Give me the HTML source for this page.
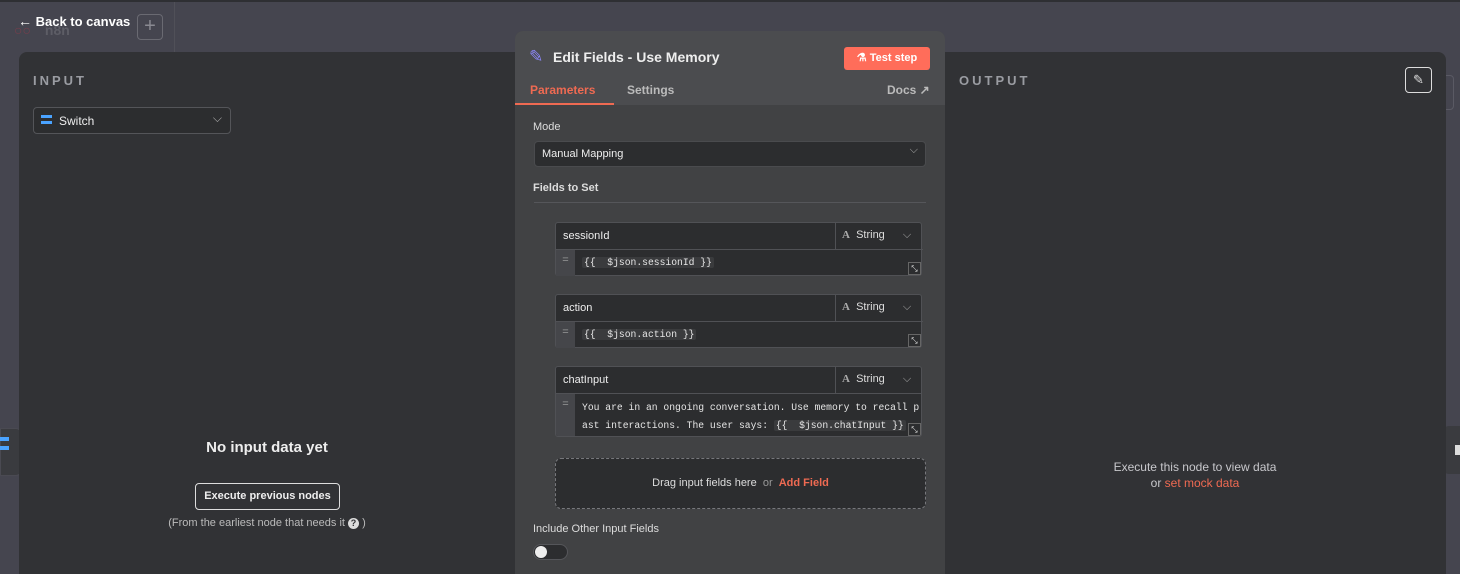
<!DOCTYPE html>
<html><head><style>
*{box-sizing:border-box;margin:0;padding:0}
html,body{width:1460px;height:574px;overflow:hidden}
body{background:#45454f;font-family:"Liberation Sans",sans-serif;position:relative;color:#ddd}
.abs{position:absolute}
.lbl{font-size:13px;letter-spacing:3px;color:#9a9ca2;font-weight:bold}
.inp{background:#2c2d2f;border:1px solid #545559;border-radius:4px}
.mono{font-family:"Liberation Mono",monospace;font-size:9.7px;color:#e6e6e6}
.chip{background:#3a3b3d;border-radius:2px;padding:0 2px}
</style></head><body>
<div class="abs" style="left:0;top:0;width:1460px;height:2px;background:#2e2f33"></div>
<div class="abs" style="left:174px;top:2px;width:1px;height:50px;background:#505058"></div>
<div class="abs" style="left:14px;top:22px;color:#7a3e4c;font-size:14px;font-weight:bold">○○<span style="margin-left:14px;color:#5d5d66">n8n</span></div>
<div class="abs" style="left:18px;top:13px;font-size:13px;font-weight:bold;color:#fff"><span style="font-size:14px">←</span> Back to canvas</div>
<div class="abs" style="left:137px;top:14px;width:26px;height:26px;border:1px solid #6a6a72;border-radius:4px;color:#8a8a92;text-align:center;line-height:22px;font-size:20px">+</div>
<div class="abs" style="left:1430px;top:75px;width:24px;height:35px;border:1px solid #5a5a64;border-radius:4px"></div>
<div class="abs" style="left:0;top:428px;width:22px;height:48px;background:#3a3b3f;border-radius:0 6px 6px 0;border:1px solid #4a4a52"></div>
<div class="abs" style="left:0;top:437px;width:9px;height:4px;background:#4aa3ff"></div>
<div class="abs" style="left:0;top:446px;width:9px;height:4px;background:#4aa3ff"></div>
<div class="abs" style="left:1443px;top:426px;width:17px;height:48px;background:#3a3b3f;border-radius:6px 0 0 6px"></div>
<div class="abs" style="left:1455px;top:445px;width:5px;height:10px;background:#ddd"></div>

<div class="abs" style="left:19px;top:52px;width:1427px;height:522px;background:#313235;border-radius:8px 8px 0 0"></div>
<div class="abs lbl" style="left:33px;top:73px">INPUT</div>
<div class="abs inp" style="left:33px;top:107px;width:198px;height:27px;font-size:12px;color:#eee;padding:6px 0 0 25px">Switch<span style="position:absolute;right:8px;top:3px;color:#aaa">⌵</span>
<span style="position:absolute;left:7px;top:7px;width:11px;height:3px;background:#4aa3ff"></span><span style="position:absolute;left:7px;top:13px;width:11px;height:3px;background:#4aa3ff"></span></div>
<div class="abs" style="left:19px;top:439px;width:496px;text-align:center;font-size:15px;font-weight:bold;color:#eee">No input data yet</div>
<div class="abs" style="left:195px;top:483px;width:145px;height:27px;border:1px solid #ddd;border-radius:4px;font-size:11px;font-weight:bold;color:#eee;text-align:center;line-height:25px">Execute previous nodes</div>
<div class="abs" style="left:19px;top:517px;width:496px;text-align:center;font-size:11px;color:#bbb">(From the earliest node that needs it <b style="display:inline-block;width:11px;height:11px;border-radius:50%;background:#ddd;color:#313235;font-size:9px;line-height:11px">?</b> )</div>

<div class="abs lbl" style="left:959px;top:73px">OUTPUT</div>
<div class="abs" style="left:1405px;top:67px;width:27px;height:26px;border:1px solid #ddd;border-radius:4px;color:#ddd;font-size:13px;text-align:center;line-height:24px">✎</div>
<div class="abs" style="left:945px;top:459px;width:500px;text-align:center;font-size:12px;color:#c8c8cc;line-height:16px">Execute this node to view data<br>or <span style="color:#ef6a52">set mock data</span></div>

<div class="abs" style="left:515px;top:31px;width:430px;height:543px;background:#414244;border-radius:8px 8px 0 0;overflow:hidden">
 <div style="position:absolute;left:0;top:0;width:430px;height:74px;background:#4b4c4f"></div>
 <div style="position:absolute;left:14px;top:16px;color:#8b86f5;font-size:17px">✎</div>
 <div style="position:absolute;left:38px;top:18px;font-size:14px;font-weight:bold;color:#eee">Edit Fields - Use Memory</div>
 <div style="position:absolute;left:329px;top:16px;width:86px;height:23px;background:#ff6d5a;border-radius:3px;color:#fff;font-size:11px;font-weight:bold;text-align:center;line-height:23px">⚗ Test step</div>
 <div style="position:absolute;left:15px;top:52px;font-size:12px;font-weight:bold;color:#ef6a52">Parameters</div>
 <div style="position:absolute;left:0;top:72px;width:99px;height:2px;background:#ef6a52"></div>
 <div style="position:absolute;left:112px;top:52px;font-size:12px;font-weight:bold;color:#bbb">Settings</div>
 <div style="position:absolute;left:372px;top:52px;font-size:12px;font-weight:bold;color:#bbb">Docs ↗</div>
 <div style="position:absolute;left:18px;top:90px;font-size:11px;color:#ddd">Mode</div>
 <div class="inp" style="position:absolute;left:19px;top:110px;width:392px;height:26px;font-size:11px;color:#eee;padding:6px 7px;border-color:#4a4b4e">Manual Mapping<span style="position:absolute;right:7px;top:2px;color:#aaa">⌵</span></div>
 <div style="position:absolute;left:18px;top:151px;font-size:11px;font-weight:bold;color:#ddd">Fields to Set</div>
 <div style="position:absolute;left:19px;top:171px;width:392px;height:1px;background:#55565a"></div>

 <div style="position:absolute;left:40px;top:191px;width:367px;height:54px;border:1px solid #505155;border-radius:3px;background:#2c2d2f">
  <div style="position:absolute;left:7px;top:7px;font-size:11px;color:#eee">sessionId</div>
  <div style="position:absolute;left:279px;top:0;width:1px;height:26px;background:#505155"></div>
  <div style="position:absolute;left:286px;top:6px;font-size:11px;color:#ddd"><b style="color:#aaa;font-family:'Liberation Serif',serif">A</b>&nbsp; String<span style="margin-left:18px;color:#aaa">⌵</span></div>
  <div style="position:absolute;left:0;top:26px;width:367px;height:1px;background:#505155"></div>
  <div style="position:absolute;left:0;top:27px;width:19px;height:26px;background:#45464a;color:#999;font-size:11px;text-align:center;line-height:20px">=</div>
  <div class="mono" style="position:absolute;left:26px;top:34px"><span class="chip">{{ &nbsp;$json.sessionId }}</span></div>
  <div style="position:absolute;right:0;bottom:0;width:13px;height:13px;border:1px solid #666;background:#2c2d2f;font-size:8px;color:#eee;text-align:center;line-height:11px">⤡</div>
 </div>
 <div style="position:absolute;left:40px;top:263px;width:367px;height:54px;border:1px solid #505155;border-radius:3px;background:#2c2d2f">
  <div style="position:absolute;left:7px;top:7px;font-size:11px;color:#eee">action</div>
  <div style="position:absolute;left:279px;top:0;width:1px;height:26px;background:#505155"></div>
  <div style="position:absolute;left:286px;top:6px;font-size:11px;color:#ddd"><b style="color:#aaa;font-family:'Liberation Serif',serif">A</b>&nbsp; String<span style="margin-left:18px;color:#aaa">⌵</span></div>
  <div style="position:absolute;left:0;top:26px;width:367px;height:1px;background:#505155"></div>
  <div style="position:absolute;left:0;top:27px;width:19px;height:26px;background:#45464a;color:#999;font-size:11px;text-align:center;line-height:20px">=</div>
  <div class="mono" style="position:absolute;left:26px;top:34px"><span class="chip">{{ &nbsp;$json.action }}</span></div>
  <div style="position:absolute;right:0;bottom:0;width:13px;height:13px;border:1px solid #666;background:#2c2d2f;font-size:8px;color:#eee;text-align:center;line-height:11px">⤡</div>
 </div>
 <div style="position:absolute;left:40px;top:335px;width:367px;height:71px;border:1px solid #505155;border-radius:3px;background:#2c2d2f;overflow:hidden">
  <div style="position:absolute;left:7px;top:7px;font-size:11px;color:#eee">chatInput</div>
  <div style="position:absolute;left:279px;top:0;width:1px;height:26px;background:#505155"></div>
  <div style="position:absolute;left:286px;top:6px;font-size:11px;color:#ddd"><b style="color:#aaa;font-family:'Liberation Serif',serif">A</b>&nbsp; String<span style="margin-left:18px;color:#aaa">⌵</span></div>
  <div style="position:absolute;left:0;top:26px;width:367px;height:1px;background:#505155"></div>
  <div style="position:absolute;left:0;top:27px;width:19px;height:44px;background:#45464a;color:#999;font-size:11px;text-align:center;line-height:20px">=</div>
  <div class="mono" style="position:absolute;left:26px;top:32px;line-height:18px;white-space:nowrap">You are in an ongoing conversation. Use memory to recall p<br>ast interactions. The user says: <span class="chip">{{ &nbsp;$json.chatInput }}</span></div>
  <div style="position:absolute;right:0;bottom:0;width:13px;height:13px;border:1px solid #666;background:#2c2d2f;font-size:8px;color:#eee;text-align:center;line-height:11px">⤡</div>
 </div>
 <div style="position:absolute;left:40px;top:427px;width:371px;height:51px;border:1px dashed #77787c;border-radius:6px;background:#2c2d2f;text-align:center;line-height:49px;font-size:11px;color:#ddd">Drag input fields here &nbsp;<span style="color:#999">or</span>&nbsp; <span style="color:#ef6a52;font-weight:bold">Add Field</span></div>
 <div style="position:absolute;left:18px;top:492px;font-size:11px;color:#ddd">Include Other Input Fields</div>
 <div style="position:absolute;left:18px;top:513px;width:35px;height:16px;border-radius:8px;background:#2c2d2f;border:1px solid #55565a"></div>
 <div style="position:absolute;left:20px;top:515px;width:12px;height:12px;border-radius:50%;background:#eee"></div>
</div>
</body></html>
